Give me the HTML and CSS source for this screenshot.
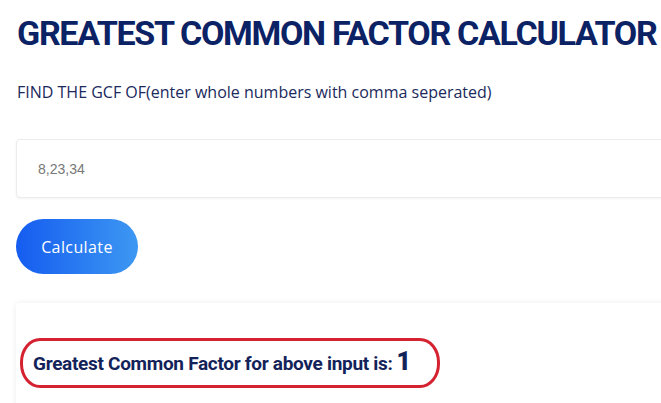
FILE: index.html
```html
<!DOCTYPE html>
<html lang="en">
<head>
    <meta charset="UTF-8">
    <meta name="viewport" content="width=device-width, initial-scale=1.0">
    <title>GCF Calculator</title>
    <link rel="stylesheet" href="styles.css">
</head>
<body>
    <div class="container">
        <h1>GREATEST COMMON FACTOR CALCULATOR</h1>
        <p class="hint">FIND THE GCF OF(enter whole numbers with comma seperated)</p>
        <input type="text" class="numbers" value="8,23,34">
        <button class="calc">Calculate</button>
        <div class="result-card">
            <span class="result">Greatest Common Factor for above input is:<b>1</b></span>
        </div>
    </div>
</body>
</html>
```

FILE: styles.css
```css
body {
    margin: 0;
    background: #fff;
    overflow: hidden;
}

.container {
    width: 720px;
    padding-left: 16px;
}

h1 {
    font-family: Roboto, sans-serif;
    font-weight: 700;
    font-size: 34px;
    line-height: 40px;
    color: #0b2265;
    margin: 13px 0 0 1px;
    letter-spacing: -1.3px;
    white-space: nowrap;
}

.hint {
    font-family: "Open Sans", sans-serif;
    font-size: 16px;
    color: #1a2a5c;
    margin: 28px 0 0 1px;
}

.numbers {
    display: block;
    box-sizing: border-box;
    width: 100%;
    height: 59px;
    margin-top: 36px;
    padding: 0 21px;
    border: 1px solid #ececec;
    border-radius: 4px;
    box-shadow: 0 1px 3px rgba(0, 0, 0, 0.05);
    font-family: "Liberation Sans", Arial, sans-serif;
    font-size: 14px;
    color: #777;
}

.calc {
    display: block;
    width: 122px;
    height: 55px;
    margin-top: 21px;
    border: none;
    border-radius: 28px;
    background: linear-gradient(90deg, #155cf0, #3d98f2);
    color: #fff;
    font-family: "Open Sans", sans-serif;
    font-size: 16px;
    letter-spacing: 0.4px;
}

.result-card {
    margin-top: 29px;
    height: 120px;
    padding: 35px 0 0 4px;
    border-radius: 4px;
    box-shadow: 0 0 6px rgba(0, 0, 0, 0.08);
}

.result {
    display: inline-block;
    padding: 6px 26px 9px 10px;
    border: 3px solid #d42231;
    border-radius: 20px / 24px;
    font-family: Roboto, sans-serif;
    font-weight: 700;
    font-size: 19px;
    letter-spacing: -0.3px;
    color: #13235a;
}

.result b {
    margin-left: 4px;
    font-size: 25px;
}
```
